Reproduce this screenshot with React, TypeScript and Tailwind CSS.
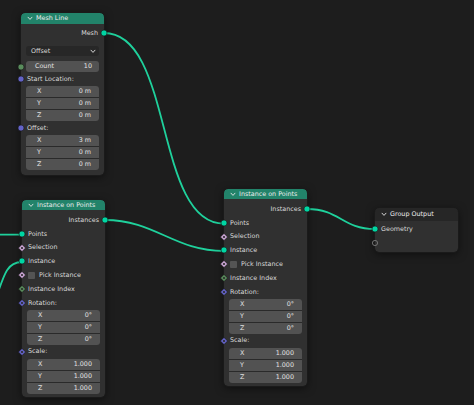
import type { ReactNode } from "react";

type Kind = "geo" | "bool" | "int" | "vec" | "empty";

const socketColor: Record<Kind, string> = {
  geo: "#00d6a3",
  bool: "#cca6d6",
  int: "#598c5c",
  vec: "#6363c7",
  empty: "transparent",
};

function Socket({
  kind,
  diamond = false,
  side = "left",
}: {
  kind: Kind;
  diamond?: boolean;
  side?: "left" | "right";
}) {
  const c = socketColor[kind];
  return (
    <svg
      className={`absolute top-1/2 -translate-y-1/2 ${
        side === "left" ? "-left-[4px]" : "-right-[4px]"
      }`}
      width="8"
      height="8"
      viewBox="0 0 8 8"
    >
      {kind === "empty" ? (
        <circle cx="4" cy="4" r="2.6" fill="none" stroke="#7a7a7a" strokeWidth="0.9" />
      ) : diamond ? (
        <>
          <path d="M4 0.4L7.6 4L4 7.6L0.4 4Z" fill={c} stroke="#151515" strokeWidth="0.6" />
          <circle cx="4" cy="4" r="1.1" fill="#2a2a2a" />
        </>
      ) : (
        <circle cx="4" cy="4" r="3" fill={c} stroke="#151515" strokeWidth="0.6" />
      )}
    </svg>
  );
}

function Chevron() {
  return (
    <svg width="6" height="5" viewBox="0 0 6 5" className="shrink-0">
      <path d="M1 1.2L3 3.4L5 1.2" fill="none" stroke="#e8e8e8" strokeWidth="0.9" strokeLinecap="round" strokeLinejoin="round" />
    </svg>
  );
}

function NodeBox({
  pos,
  title,
  header = "bg-[#22836a]",
  headerH = "h-[11px]",
  children,
}: {
  pos: string;
  title: string;
  header?: string;
  headerH?: string;
  children: ReactNode;
}) {
  return (
    <div
      className={`absolute ${pos} w-[83px] rounded-[4px] bg-[#303030] shadow-[0_2px_8px_rgba(0,0,0,0.55)] outline outline-1 outline-[#1a1a1a]`}
    >
      <div className={`${headerH} ${header} rounded-t-[4px] flex items-center gap-[3px] pl-[6px] text-[#ececec]`}>
        <Chevron />
        <span className="leading-none">{title}</span>
      </div>
      {children}
    </div>
  );
}

function Row({
  label,
  socket,
  diamond,
  output = false,
  h = "h-[13.8px]",
  children,
}: {
  label?: string;
  socket?: Kind;
  diamond?: boolean;
  output?: boolean;
  h?: string;
  children?: ReactNode;
}) {
  return (
    <div className={`relative ${h} flex items-center px-[6px] ${output ? "justify-end" : ""}`}>
      {children}
      {label && <span className="leading-none text-[#dadada]">{label}</span>}
      {socket && <Socket kind={socket} diamond={diamond} side={output ? "right" : "left"} />}
    </div>
  );
}

function Field({ label, value, h = "h-[11px]" }: { label: string; value: string; h?: string }) {
  return (
    <div className={`${h} bg-[#525252] flex items-center justify-between pl-[11px] pr-[8px] text-[#e2e2e2]`}>
      <span className="leading-none">{label}</span>
      <span className="leading-none">{value}</span>
    </div>
  );
}

function Vec({ values }: { values: string[] }) {
  return (
    <div className="mx-[5px] flex flex-col gap-px bg-[#2a2a2a] rounded-[3px] overflow-hidden">
      <Field label="X" value={values[0]} />
      <Field label="Y" value={values[1]} />
      <Field label="Z" value={values[2]} />
    </div>
  );
}

function InstanceOnPoints({ pos }: { pos: string }) {
  return (
    <NodeBox pos={pos} title="Instance on Points" headerH="h-[10px]">
      <div className="pt-[3px] pb-[3px]">
        <Row label="Instances" socket="geo" output h="h-[14px]" />
        <Row label="Points" socket="geo" />
        <Row label="Selection" socket="bool" diamond />
        <Row label="Instance" socket="geo" />
        <Row socket="bool" diamond>
          <div className="w-[7px] h-[7px] rounded-[1px] bg-[#545454] mr-[4px]" />
          <span className="leading-none text-[#dadada]">Pick Instance</span>
        </Row>
        <Row label="Instance Index" socket="int" diamond />
        <Row label="Rotation:" socket="vec" diamond />
        <Vec values={["0°", "0°", "0°"]} />
        <Row label="Scale:" socket="vec" diamond />
        <Vec values={["1.000", "1.000", "1.000"]} />
      </div>
    </NodeBox>
  );
}

export default function App() {
  return (
    <div className="relative w-[474px] h-[405px] overflow-hidden bg-[#1d1d1d] font-['DejaVu_Sans',sans-serif] text-[6.4px]">
      {/* wires */}
      <svg className="absolute inset-0" width="474" height="405" viewBox="0 0 474 405" fill="none">
        <g stroke="#1fd19c" strokeWidth="1.8" strokeLinecap="round">
          <path d="M104 33 C174 33 154 223.7 224 223.7" />
          <path d="M105 220 C155 220 174 251 224 251" />
          <path d="M307 209 C340 209 342 229 375 229" />
          <path d="M-10 234.7 L22 234.7" />
          <path d="M-8 310 C4 275 6 262 22 262" />
        </g>
      </svg>

      {/* Mesh Line */}
      <NodeBox pos="left-[21px] top-[13px]" title="Mesh Line">
        <div className="pt-[2px] pb-[5px]">
          <Row label="Mesh" socket="geo" output h="h-[14px]" />
          <div className="mt-[6px] mx-[5px] h-[10px] rounded-[3px] bg-[#272727] flex items-center justify-between pl-[5px] pr-[3px] text-[#dadada]">
            <span className="leading-none">Offset</span>
            <Chevron />
          </div>
          <div className="relative mt-[5px]">
            <div className="mx-[5px] rounded-[3px] overflow-hidden">
              <div className="h-[11px] bg-[#525252] flex items-center justify-between pl-[9px] pr-[7px] text-[#e2e2e2]">
                <span className="leading-none">Count</span>
                <span className="leading-none">10</span>
              </div>
            </div>
            <Socket kind="int" />
          </div>
          <Row label="Start Location:" socket="vec" h="h-[14px]" />
          <Vec values={["0 m", "0 m", "0 m"]} />
          <Row label="Offset:" socket="vec" h="h-[14px]" />
          <Vec values={["3 m", "0 m", "0 m"]} />
        </div>
      </NodeBox>

      <InstanceOnPoints pos="left-[22px] top-[200px]" />
      <InstanceOnPoints pos="left-[224px] top-[189px]" />

      {/* Group Output */}
      <NodeBox pos="left-[375px] top-[208px]" title="Group Output" header="bg-[#262626]" headerH="h-[13px]">
        <div className="pt-[1px] pb-[2px]">
          <Row label="Geometry" socket="geo" h="h-[14px]" />
          <Row socket="empty" h="h-[14px]" />
        </div>
      </NodeBox>
    </div>
  );
}
